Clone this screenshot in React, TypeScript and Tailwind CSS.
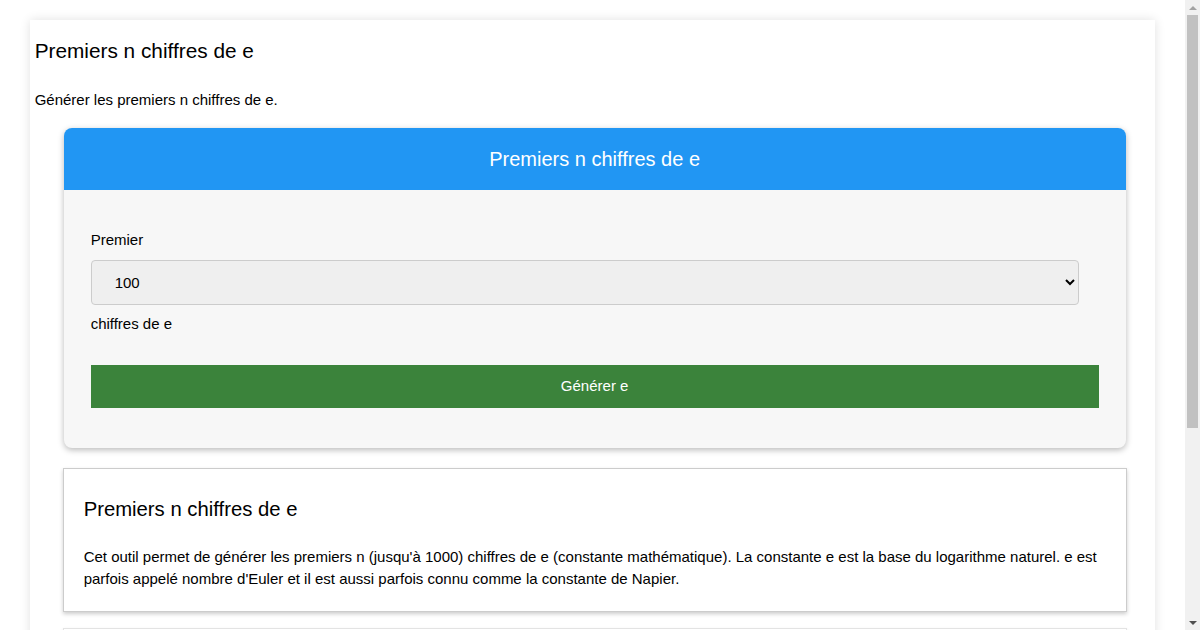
const font = { fontFamily: '"Liberation Sans", Arial, sans-serif' };

function Scrollbar() {
  return (
    <div className="flex h-[630px] w-[15px] shrink-0 flex-col bg-[#f1f1f1]">
      <div className="flex h-[15px] items-center justify-center">
        <div className="h-0 w-0 border-x-[4px] border-b-[4px] border-x-transparent border-b-[#a3a3a3]" />
      </div>
      <div className="mx-[2px] h-[413px] bg-[#c1c1c1]" />
      <div className="flex-1" />
      <div className="flex h-[15px] items-center justify-center">
        <div className="h-0 w-0 border-x-[4px] border-t-[4px] border-x-transparent border-t-[#505050]" />
      </div>
    </div>
  );
}

export default function App() {
  return (
    <div className="flex h-[630px] overflow-hidden bg-white text-black" style={font}>
      <div className="flex-1 pt-[20px]">
        <div className="mx-auto w-[95%] bg-white px-[5px] pt-[19px] pb-[40px] shadow-[0_0_10px_rgba(0,0,0,0.12)]">
          <h1 className="text-[20.8px] leading-[24px] font-normal">Premiers n chiffres de e</h1>
          <p className="mt-[27px] text-[15px] leading-[20px]">Générer les premiers n chiffres de e.</p>

          {/* generator card */}
          <div className="mt-[18px] ml-[29px] w-[1062px] overflow-hidden rounded-[8px] bg-[#f7f7f7] shadow-[0_2px_6px_rgba(0,0,0,0.28)]">
            <div className="flex h-[62px] items-center justify-center bg-[#2196f3] text-[20px] text-white">
              Premiers n chiffres de e
            </div>
            <div className="px-[27px] pt-[40px] pb-[40px]">
              <label className="block text-[15px] leading-[20px]">Premier</label>
              <select
                defaultValue="100"
                className="mt-[10px] block h-[45px] w-[988px] rounded-[4px] border border-[#cccccc] bg-[#efefef] pl-[19px] pr-[4px] text-[15px] text-black"
              >
                <option value="10">10</option>
                <option value="50">50</option>
                <option value="100">100</option>
                <option value="500">500</option>
                <option value="1000">1000</option>
              </select>
              <div className="mt-[9px] text-[15px] leading-[20px]">chiffres de e</div>
              <button className="mt-[31px] flex h-[43px] w-full items-center justify-center bg-[#3b833b] text-[15px] text-white">
                Générer e
              </button>
            </div>
          </div>

          {/* description */}
          <div className="mt-[20px] ml-[28px] w-[1064px] border border-[#cccccc] bg-white px-[20px] pt-[28px] pb-[21px] shadow-[0_2px_4px_rgba(0,0,0,0.2)]">
            <h2 className="text-[20.3px] leading-[24px] font-normal">Premiers n chiffres de e</h2>
            <p className="mt-[25px] text-[15px] leading-[22px]">
              Cet outil permet de générer les premiers n (jusqu'à 1000) chiffres de e (constante mathématique). La constante e est la base du logarithme naturel. e est parfois appelé nombre d'Euler et il est aussi parfois connu comme la constante de Napier.
            </p>
          </div>

          {/* next card, only its top edge is in view */}
          <div className="mt-[16px] ml-[28px] h-[200px] w-[1064px] border border-[#e3e3e3] bg-white shadow-[0_2px_4px_rgba(0,0,0,0.12)]" />
        </div>
      </div>
      <Scrollbar />
    </div>
  );
}
